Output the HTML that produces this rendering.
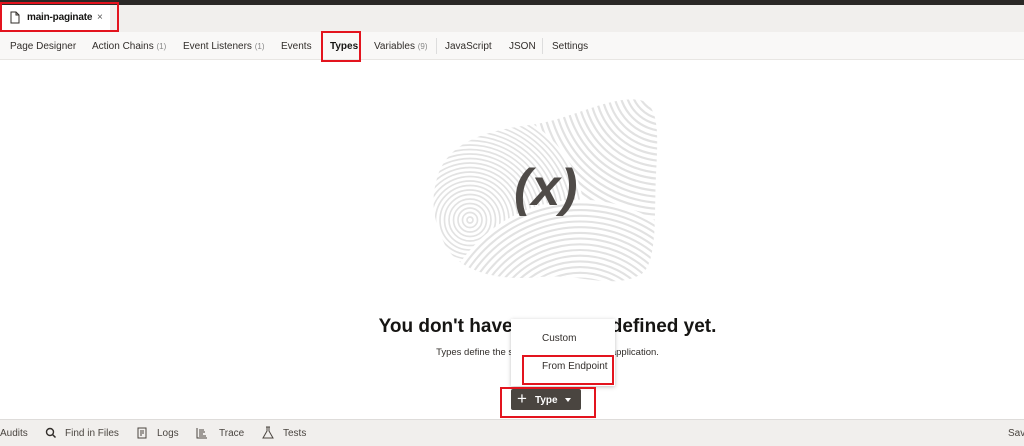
<!DOCTYPE html>
<html><head><style>
*{margin:0;padding:0;box-sizing:border-box}
html,body{width:1024px;height:446px;overflow:hidden}
body{background:#fff;font-family:"Liberation Sans",sans-serif;position:relative;color:#161513}
.abs{position:absolute}
.red{position:absolute;border:2px solid #e3141e}
.nav span{position:absolute;top:41px;font-size:10px;color:#312d2a;white-space:nowrap}
.nav small{color:#888;font-size:8px}
.foot span{position:absolute;top:428px;font-size:10px;color:#4a4540;white-space:nowrap}
</style></head><body>
<div class="abs" style="left:0;top:0;width:1024px;height:5px;background:#2b2826"></div>
<div class="abs" style="left:0;top:5px;width:1024px;height:27px;background:#f1efed"></div>
<div class="abs" style="left:0;top:5px;width:110px;height:27px;background:#fff"></div>
<svg class="abs" style="left:10px;top:11px" width="10" height="13" viewBox="0 0 10 13"><path d="M1 1h5l3 3v8H1z M6 1v3h3" fill="none" stroke="#312d2a" stroke-width="1"/></svg>
<div class="abs" style="left:27px;top:12px;font-size:10px;font-weight:bold;letter-spacing:-0.2px">main-paginate</div>
<div class="abs" style="left:97px;top:12px;font-size:10px;color:#555">×</div>
<div class="red" style="left:0;top:2px;width:119px;height:30px"></div>
<div class="abs" style="left:0;top:32px;width:1024px;height:28px;background:#f9f8f7;border-bottom:1px solid #e8e6e3"></div>
<div class="nav">
<span style="left:10px">Page Designer</span>
<span style="left:92px">Action Chains <small>(1)</small></span>
<span style="left:183px">Event Listeners <small>(1)</small></span>
<span style="left:281px">Events</span>
<span style="left:330px;font-weight:bold;color:#161513">Types</span>
<span style="left:374px">Variables <small>(9)</small></span>
<span style="left:445px">JavaScript</span>
<span style="left:509px">JSON</span>
<span style="left:552px">Settings</span>
</div>
<div class="abs" style="left:436px;top:38px;width:1px;height:16px;background:#ddd"></div>
<div class="abs" style="left:542px;top:38px;width:1px;height:16px;background:#ddd"></div>
<div class="red" style="left:321px;top:31px;width:40px;height:31px"></div>

<svg class="abs" style="left:430px;top:95px" width="232" height="195" viewBox="0 0 232 195">
<defs>
<clipPath id="c"><path d="M8 80 C20 45 60 35 100 30 C140 25 180 0 210 5 C230 10 228 40 226 80 C224 120 228 170 210 180 C180 195 150 178 110 182 C70 186 30 178 15 150 C3 125 0 105 8 80Z"/></clipPath>
<g id="r"><circle r="153" fill="#fff" stroke="none"/><g fill="none" stroke="#e2e2e2" stroke-width="2.2">
<circle r="4"/><circle r="10"/><circle r="16"/><circle r="22"/><circle r="28"/><circle r="34"/><circle r="40"/><circle r="46"/><circle r="52"/><circle r="58"/><circle r="64"/><circle r="70"/><circle r="76"/><circle r="82"/><circle r="88"/><circle r="94"/><circle r="100"/><circle r="106"/><circle r="112"/><circle r="118"/><circle r="124"/><circle r="130"/><circle r="136"/><circle r="142"/><circle r="148"/></g></g>
</defs>
<g clip-path="url(#c)">
<use href="#r" transform="translate(235,-10)"/>
<use href="#r" transform="translate(40,125) scale(0.75)"/>
<use href="#r" transform="translate(150,250) scale(0.95)"/>
</g>
<text x="84" y="110" font-family="Liberation Sans,sans-serif" font-size="52" font-style="italic" font-weight="bold" fill="#4f4b48">(x)</text>
</svg>

<div class="abs" style="left:0;top:316px;width:1024px;padding-left:71px;text-align:center;font-size:19px;font-weight:bold;white-space:nowrap">You don't have any types defined yet.</div>
<div class="abs" style="left:0;top:347px;width:1024px;padding-left:71px;text-align:center;font-size:9.5px;color:#312d2a;white-space:nowrap">Types define the structure of data in your application.</div>

<div class="abs" style="left:511px;top:319px;width:104px;height:67px;background:#fff;box-shadow:0 1px 4px rgba(0,0,0,.25)"></div>
<div class="abs" style="left:542px;top:333px;font-size:10px;color:#312d2a">Custom</div>
<div class="abs" style="left:542px;top:361px;font-size:10px;color:#312d2a">From Endpoint</div>
<div class="red" style="left:522px;top:355px;width:92px;height:30px"></div>

<div class="abs" style="left:511px;top:389px;width:70px;height:21px;background:#4a4540;border-radius:2px"></div>
<div class="abs" style="left:517px;top:389px;font-size:17px;color:#fff;line-height:20px">+</div>
<div class="abs" style="left:535px;top:395px;font-size:10px;font-weight:bold;color:#fff">Type</div>
<div class="abs" style="left:565px;top:398px;width:0;height:0;border-left:3.5px solid transparent;border-right:3.5px solid transparent;border-top:4px solid #fff"></div>
<div class="red" style="left:500px;top:387px;width:96px;height:31px"></div>

<div class="abs" style="left:0;top:419px;width:1024px;height:27px;background:#f1efed;border-top:1px solid #dedcda"></div>
<div class="foot">
<span style="left:0">Audits</span>
<svg class="abs" style="left:45px;top:427px" width="12" height="12"><circle cx="5" cy="5" r="3.5" fill="none" stroke="#312d2a" stroke-width="1.4"/><path d="M7.5 7.5l3 3" stroke="#312d2a" stroke-width="1.5"/></svg>
<span style="left:65px">Find in Files</span>
<svg class="abs" style="left:137px;top:427px" width="11" height="12"><rect x="1" y="1" width="8" height="10" fill="none" stroke="#4a4540"/><path d="M3 4h4M3 6h4M3 8h2" stroke="#4a4540"/></svg>
<span style="left:157px">Logs</span>
<svg class="abs" style="left:196px;top:427px" width="12" height="12"><path d="M1 1v10h10M3 3h5M3 5h6M3 7h4M3 9h7" stroke="#4a4540" fill="none"/></svg>
<span style="left:219px">Trace</span>
<svg class="abs" style="left:262px;top:426px" width="12" height="13"><path d="M4 1h4M5 1v4L1 12h10L7 5V1" stroke="#4a4540" fill="none"/></svg>
<span style="left:283px">Tests</span>
<span style="left:1008px;width:16px;overflow:hidden">Save</span>
</div>
</body></html>
